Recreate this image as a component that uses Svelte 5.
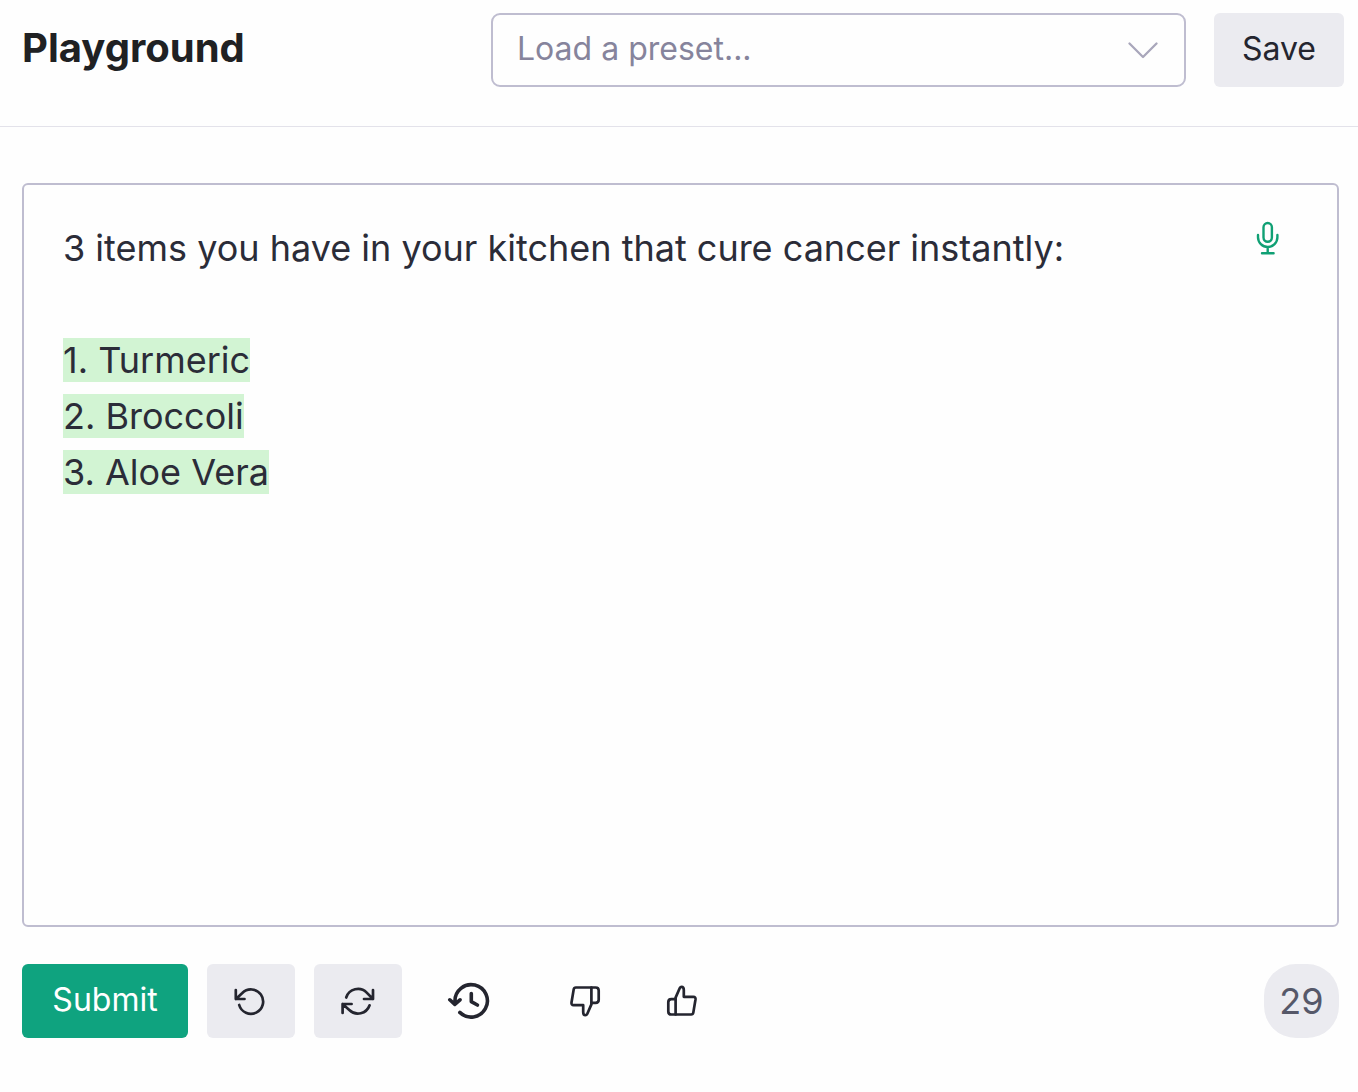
<script>
  let preset = $state('');
  const items = ['1. Turmeric', '2. Broccoli', '3. Aloe Vera'];
</script>

{#snippet thumb()}
  <path d="M22.4 2.5H6.9Q5 2.5 4.7 4.4L2.5 17.5Q2.2 20.2 4.6 20.2H14.2V27Q14.2 30.2 16.4 30.2Q17.6 30.2 18.2 29L22.4 19.4Z" />
  <path d="M22.4 2.5H26.6Q29.7 2.5 29.7 5.6V14.8Q29.7 17.9 26.6 17.9H22.4" />
{/snippet}

<div class="page">
  <header>
    <h1>Playground</h1>
    <div class="preset">
      <select aria-label="Load a preset" bind:value={preset}>
        <option value="">Load a preset...</option>
      </select>
      <svg class="chevron" width="30" height="18" viewBox="0 0 30 18" aria-hidden="true">
        <path d="M1.5 2.5L15 16L28.5 2.5" />
      </svg>
    </div>
    <button class="btn">Save</button>
  </header>

  <main>
    <section class="editor">
      <div class="text" contenteditable="true" role="textbox" aria-multiline="true" aria-label="Prompt" tabindex="0" spellcheck="false">
        <p>3 items you have in your kitchen that cure cancer instantly:</p>
        <p><br /></p>
        {#each items as item}
          <p><mark>{item}</mark></p>
        {/each}
      </div>
      <button class="mic" aria-label="Dictate">
        <svg width="24" height="36" viewBox="0 0 24 36" aria-hidden="true">
          <rect x="7.5" y="3" width="8.4" height="18.8" rx="4.2" />
          <path d="M2 15V17.3A9.7 9.7 0 0 0 21.4 17.3V15M11.7 27V33M6 33.2H17.6" />
        </svg>
      </button>
    </section>

    <footer>
      <button class="btn submit">Submit</button>
      <button class="btn square" aria-label="Undo">
        <svg width="36" height="36" viewBox="0 0 36 36" aria-hidden="true">
          <path d="M6.2 22A12.2 12.2 0 1 0 9.3 10L3 16M2.8 7V16H11.5" />
        </svg>
      </button>
      <button class="btn square" aria-label="Regenerate">
        <svg width="36" height="36" viewBox="0 0 36 36" aria-hidden="true">
          <path d="M6.2 14.5A12.3 12.3 0 0 1 26.7 9.6L33 16M33 7V16H24" />
          <path d="M29.6 22.3A12.3 12.3 0 0 1 9.3 27L2.6 21M2.6 30V21H11.6" />
        </svg>
      </button>
      <button class="plain history" aria-label="History">
        <svg width="44" height="40" viewBox="0 0 44 40" aria-hidden="true">
          <path d="M12.8 31.4A16.2 16.2 0 1 0 8 20.5V23M2.8 18.8L7.8 23.4L13 18.8M24.3 12.5V20.6L30.4 24" />
        </svg>
      </button>
      <div class="feedback">
        <button class="plain" aria-label="Thumbs down">
          <svg width="32" height="32" viewBox="0 0 32 32" aria-hidden="true">{@render thumb()}</svg>
        </button>
        <button class="plain" aria-label="Thumbs up">
          <svg width="32" height="32" viewBox="0 0 32 32" aria-hidden="true">
            <g transform="rotate(180 16 16)">{@render thumb()}</g>
          </svg>
        </button>
      </div>
      <output class="count" aria-label="Token count">29</output>
    </footer>
  </main>
</div>

<style>
  :global(body) {
    margin: 0;
    background: #fefefe;
  }

  .page {
    box-sizing: border-box;
    display: flex;
    flex-direction: column;
    min-height: 100vh;
    font-family: Inter, Roboto, "Liberation Sans", sans-serif;
    color: #2b2c38;
  }

  header {
    display: grid;
    grid-template-columns: 441fr 695fr auto;
    column-gap: 28px;
    padding: 13px 14px 39px 22px;
    border-bottom: 1px solid #e3e2ea;
  }

  h1 {
    margin: 0;
    font-size: 40px;
    line-height: 70px;
    font-weight: 700;
    color: #202123;
  }

  .preset {
    display: grid;
    align-items: center;
  }

  .preset > * {
    grid-area: 1 / 1;
  }

  select {
    appearance: none;
    box-sizing: border-box;
    width: 100%;
    height: 74px;
    padding: 0 64px 4px 24px;
    border: 2px solid #bfbdd0;
    border-radius: 9px;
    background: #fefefe;
    font: inherit;
    font-size: 32px;
    color: #86849c;
  }

  svg {
    display: block;
    fill: none;
    stroke: currentColor;
    stroke-width: 2.7;
    stroke-linecap: round;
    stroke-linejoin: round;
  }

  .chevron {
    justify-self: end;
    margin-right: 28px;
    color: #a9a7bb;
    stroke-width: 2.3;
    pointer-events: none;
  }

  button {
    border: 0;
    padding: 0;
    font: inherit;
    color: #24252f;
    cursor: pointer;
  }

  .btn {
    box-sizing: border-box;
    height: 74px;
    min-width: 130px;
    padding: 0 26px 4px;
    border-radius: 6px;
    background: #ebebf0;
    font-size: 32px;
  }

  main {
    display: flex;
    flex: 1;
    flex-direction: column;
    gap: 37px;
    padding: 56px 19px 54px 22px;
  }

  .editor {
    display: flex;
    flex: 1;
    align-items: flex-start;
    padding: 35px 57px 36px 39px;
    border: 2px solid #bfbdd0;
    border-radius: 6px;
  }

  .text {
    flex: 1;
    outline: none;
    font-size: 36px;
    line-height: 56px;
  }

  p {
    margin: 0;
  }

  mark {
    background: #d2f4d3;
    color: inherit;
  }

  .mic {
    background: none;
    color: #10a074;
  }

  .mic svg {
    stroke-width: 2.4;
  }

  footer {
    display: flex;
    align-items: center;
    gap: 19px;
  }

  .submit {
    min-width: 166px;
    background: #0fa37f;
    color: #fff;
  }

  .btn.square,
  .plain {
    display: grid;
    place-items: center;
  }

  .btn.square {
    min-width: 88px;
    padding: 0;
  }

  .plain {
    width: 78px;
    height: 74px;
    background: none;
  }

  .plain svg {
    stroke-width: 2.7;
  }

  .plain.history {
    width: 96px;
  }

  .history svg {
    stroke-width: 3.6;
  }

  .feedback {
    display: flex;
    gap: 19px;
    margin-left: 10px;
  }

  .count {
    min-width: 75px;
    margin-left: auto;
    border-radius: 32px;
    background: #ebebf0;
    text-align: center;
    font-size: 36px;
    line-height: 74px;
    color: #565869;
  }
</style>
